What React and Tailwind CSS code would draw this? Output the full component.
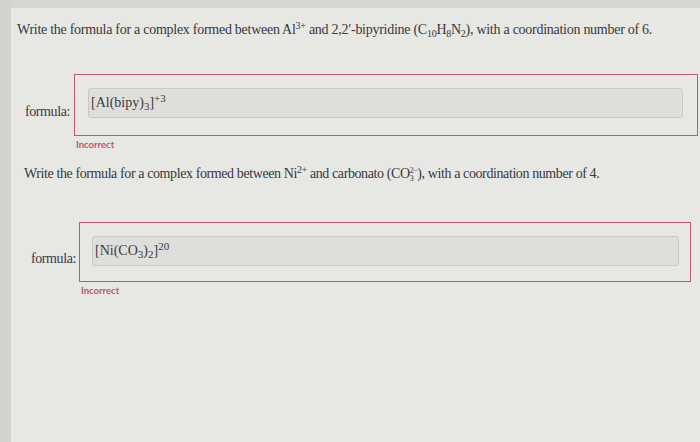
import React from 'react';

const serif = { fontFamily: '"Liberation Serif", "Times New Roman", serif' };

const FormulaRow = ({ children, className, labelWidth, boxPad, noteIndent }) => (
  <div className={className}>
    <div className="flex items-center">
      <span className={`${labelWidth} shrink-0 pt-[12px] text-[14px] tracking-[-0.4px] text-[#3b3b42]`}>
        formula:
      </span>
      <div className={`flex-1 border-[1.5px] border-[#c0596b] ${boxPad}`}>
        <div className="flex h-[30px] items-start rounded-[3px] border border-[#c9c9c6] bg-[#dededb] px-[2px] pt-[3px] text-[14px] text-[#3b3b42]">
          {children}
        </div>
      </div>
    </div>
    <div
      className={`${noteIndent} mt-[3px] text-[9.5px] font-bold leading-[12px] text-[#c2566d]`}
      style={{ fontFamily: 'Lato, "Open Sans", sans-serif' }}
    >
      Incorrect
    </div>
  </div>
);

export default function App() {
  return (
    <div className="flex h-[442px] w-[700px] overflow-hidden bg-[#d6d5d4]" style={serif}>
      <div className="w-[11px] shrink-0 bg-[#d3d2d1]" />
      <div className="flex flex-1 flex-col pt-[8px]">
        <div className="flex flex-1 flex-col bg-[#e7e7e3] pr-[6px]">
          <p className="ml-[6px] mt-[12px] text-[14px] leading-[20px] tracking-[-0.27px] text-[#38383f]">
            Write the formula for a complex formed between Al<sup className="text-[10px]">3+</sup> and
            2,2′-bipyridine (C<sub className="text-[10px]">10</sub>H<sub className="text-[10px]">8</sub>N
            <sub className="text-[10px]">2</sub>), with a coordination number of 6.
          </p>

          <FormulaRow
            className="ml-[14px] mt-[34px] mr-[-4px]"
            labelWidth="w-[49px]"
            boxPad="pl-[13px] pr-[14px] pt-[13px] pb-[17px]"
            noteIndent="ml-[51px]"
          >
            <span>
              [Al(bipy)<sub className="text-[11px]">3</sub>]<sup className="text-[11px]">+3</sup>
            </span>
          </FormulaRow>

          <p className="ml-[13px] mt-[13px] text-[14px] leading-[20px] tracking-[-0.4px] text-[#38383f]">
            Write the formula for a complex formed between Ni<sup className="text-[10px]">2+</sup> and
            carbonato (CO
            <span className="inline-flex flex-col align-middle text-[8px] leading-[8px]">
              <span>2−</span>
              <span>3</span>
            </span>
            ), with a coordination number of 4.
          </p>

          <FormulaRow
            className="ml-[20px] mt-[38px] mr-[3px]"
            labelWidth="w-[48px]"
            boxPad="pl-[12px] pr-[11px] pt-[13px] pb-[15px]"
            noteIndent="ml-[50px]"
          >
            <span>
              [Ni(CO<sub className="text-[11px]">3</sub>)<sub className="text-[11px]">2</sub>]
              <sup className="text-[11px]">20</sup>
            </span>
          </FormulaRow>
        </div>
      </div>
    </div>
  );
}
